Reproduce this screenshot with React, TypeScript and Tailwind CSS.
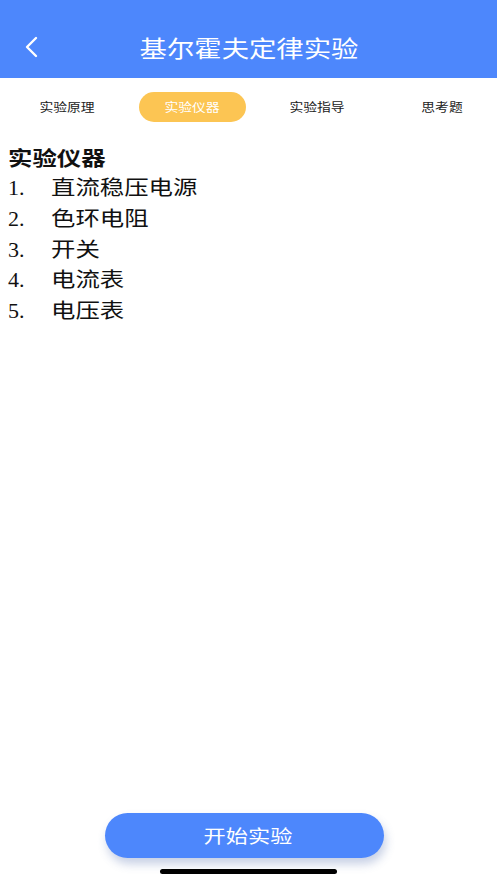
import React from "react";

const tabs = ["实验原理", "实验仪器", "实验指导", "思考题"];
const items = ["直流稳压电源", "色环电阻", "开关", "电流表", "电压表"];

export default function App() {
  return (
    <div className="relative flex h-[883px] w-[497px] flex-col overflow-hidden bg-white font-['Noto_Sans_CJK_SC',sans-serif]">
      {/* Header */}
      <div className="relative flex h-[78px] items-center justify-center bg-[#4d87fc] pt-[17px]">
        <button className="absolute left-[22px] top-[36px] text-white">
          <svg width="20" height="22" viewBox="0 0 20 22" fill="none">
            <path d="M14 2 L5 11 L14 20" stroke="white" strokeWidth="2.4" strokeLinecap="round" strokeLinejoin="round" />
          </svg>
        </button>
        <h1 className="scale-x-[1.19] text-[23px] font-normal text-white">基尔霍夫定律实验</h1>
      </div>

      {/* Tabs */}
      <div className="flex h-[58px] items-center pl-[5px]">
        {tabs.map((t, i) => (
          <div key={t} className="flex w-[125px] shrink-0 justify-center">
            <span
              className={
                i === 1
                  ? "flex h-[30px] w-[107px] items-center justify-center rounded-full bg-[#fcc553] text-white"
                  : "flex h-[30px] items-center text-[#222]"
              }
            >
              <span className="scale-x-[1.15] text-[12px]">{t}</span>
            </span>
          </div>
        ))}
      </div>

      {/* Content */}
      <div className="px-[8px] pt-[7px] text-[#111]">
        <h2 className="origin-left scale-x-[1.22] text-[20px] font-bold leading-[30px]">实验仪器</h2>
        <ol className="-mt-[1px]">
          {items.map((it, i) => (
            <li key={it} className="flex h-[30.75px] items-baseline">
              <span className="w-[43px] font-['Liberation_Serif',serif] text-[22px] leading-[30.75px]">{i + 1}.</span>
              <span className="origin-left scale-x-[1.22] text-[20px] leading-[30.75px]">{it}</span>
            </li>
          ))}
        </ol>
      </div>

      <div className="flex-1" />

      {/* Bottom button */}
      <div className="flex pb-[25px] pl-[105px]">
        <button className="flex h-[45px] w-[279px] items-center justify-center rounded-full bg-[#4d87fc] text-white shadow-[2px_6px_10px_rgba(70,100,170,0.3)]">
          <span className="ml-[8px] scale-x-[1.2] text-[18.5px]">开始实验</span>
        </button>
      </div>
      <div className="absolute bottom-[9px] left-[160px] h-[5px] w-[177px] rounded-full bg-black" />
    </div>
  );
}
